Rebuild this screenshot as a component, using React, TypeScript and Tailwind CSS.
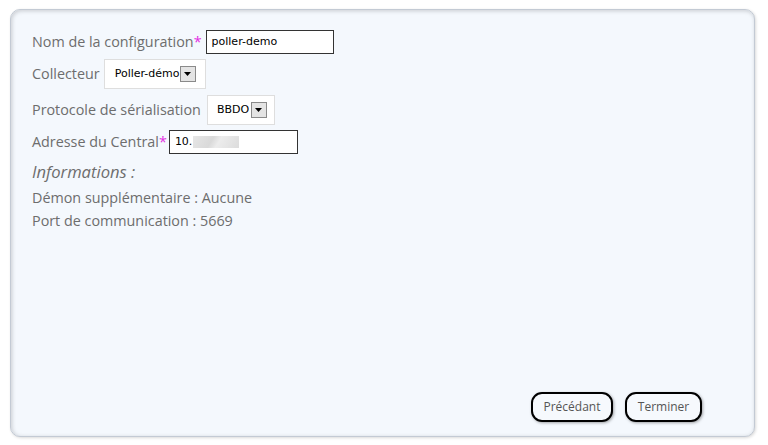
import React from 'react';

const label = "text-[14.35px] text-[#6d6d6d] font-['Open_Sans',sans-serif]";
const field = "font-['DejaVu_Sans',sans-serif] text-[11px] text-black";

const Arrow: React.FC = () => (
    <span className="flex items-center justify-center w-[16px] h-[16px] bg-[#e4e4e4] border border-[#8a8a8a]">
        <svg width="7" height="4" viewBox="0 0 7 4">
            <path d="M0 0h7L3.5 4z" fill="#000" />
        </svg>
    </span>
);

const Star: React.FC = () => <span className="text-[#e22ee2]">*</span>;

const App: React.FC = () => {
    return (
        <div className="h-[445px] w-[768px] bg-white pt-[9px] pl-[10px] pr-[13px] pb-[8px]">
            <div className="h-full flex flex-col rounded-[10px] border border-[#c3cad4] bg-[#f4f8fd] shadow-[inset_1px_1px_4px_rgba(0,0,0,0.18),1px_1px_3px_rgba(0,0,0,0.15)] pl-[21px] pt-[20px] pr-[52px] pb-[14px]">
                {/* Form rows */}
                <div className="flex items-center h-[24px]">
                    <span className={label}>Nom de la configuration<Star /></span>
                    <div className={`ml-[4px] w-[128px] h-[24px] border border-[#333] bg-white flex items-center pl-[5px] ${field}`}>
                        poller-demo
                    </div>
                </div>

                <div className="flex items-center h-[30px] mt-[5px]">
                    <span className={label}>Collecteur</span>
                    <div className={`ml-[4px] w-[102px] h-[30px] bg-white border border-[#dedede] flex items-center pl-[10px] ${field}`}>
                        <span className="w-[65px] overflow-hidden whitespace-nowrap">Poller-démo</span>
                        <Arrow />
                    </div>
                </div>

                <div className="flex items-center h-[30px] mt-[6px]">
                    <span className={label}>Protocole de sérialisation</span>
                    <div className={`ml-[6px] w-[68px] h-[30px] bg-white border border-[#dedede] flex items-center pl-[9px] ${field}`}>
                        <span className="w-[34px] overflow-hidden whitespace-nowrap">BBDO</span>
                        <Arrow />
                    </div>
                </div>

                <div className="flex items-center h-[24px] mt-[5px]">
                    <span className={label}>Adresse du Central<Star /></span>
                    <div className={`ml-[2px] w-[129px] h-[24px] border border-[#333] bg-white flex items-center pl-[5px] ${field}`}>
                        10.
                        <span className="ml-[1px] w-[46px] h-[12px] bg-[linear-gradient(120deg,#e6e6e6,#d9d9d9_40%,#ececec_55%,#dcdcdc)]" />
                    </div>
                </div>

                <div className="mt-[7px] text-[16.6px] italic text-[#6d6d6d] font-['Open_Sans',sans-serif] leading-[22px]">
                    Informations :
                </div>
                <div className={`${label} leading-[22px] mt-[4px]`}>Démon supplémentaire : Aucune</div>
                <div className={`${label} leading-[22px] mt-[1px]`}>Port de communication : 5669</div>

                {/* Navigation buttons */}
                <div className="mt-auto flex justify-end gap-[12px]">
                    <button className="w-[82px] h-[30px] rounded-[11px] border-2 border-black bg-[#f6f9fd] text-[12px] text-[#555] font-['Open_Sans',sans-serif] shadow-[1px_1px_3px_rgba(0,0,0,0.35)]">
                        Précédant
                    </button>
                    <button className="w-[77px] h-[30px] rounded-[11px] border-2 border-black bg-[#f6f9fd] text-[12px] text-[#555] font-['Open_Sans',sans-serif] shadow-[1px_1px_3px_rgba(0,0,0,0.35)]">
                        Terminer
                    </button>
                </div>
            </div>
        </div>
    );
};

export default App;
